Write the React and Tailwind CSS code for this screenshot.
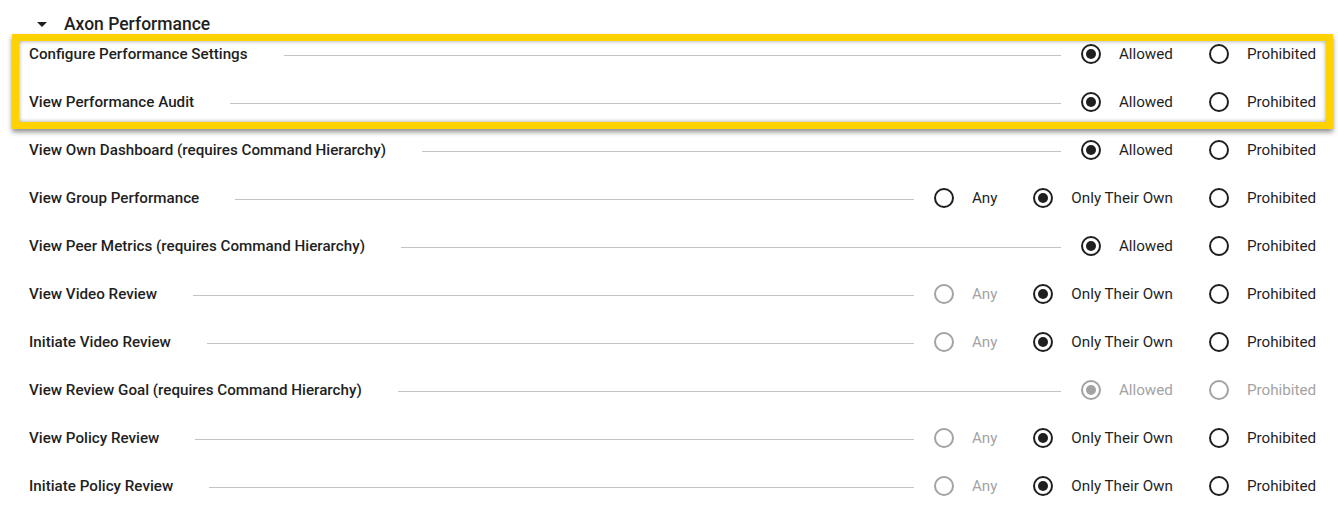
import React from 'react';

const rows = [
  { label: 'Configure Performance Settings', options: [['Allowed', 'on'], ['Prohibited', 'off']] },
  { label: 'View Performance Audit', options: [['Allowed', 'on'], ['Prohibited', 'off']] },
  { label: 'View Own Dashboard (requires Command Hierarchy)', options: [['Allowed', 'on'], ['Prohibited', 'off']] },
  { label: 'View Group Performance', options: [['Any', 'off'], ['Only Their Own', 'on'], ['Prohibited', 'off']] },
  { label: 'View Peer Metrics (requires Command Hierarchy)', options: [['Allowed', 'on'], ['Prohibited', 'off']] },
  { label: 'View Video Review', options: [['Any', 'off', true], ['Only Their Own', 'on'], ['Prohibited', 'off']] },
  { label: 'Initiate Video Review', options: [['Any', 'off', true], ['Only Their Own', 'on'], ['Prohibited', 'off']] },
  { label: 'View Review Goal (requires Command Hierarchy)', options: [['Allowed', 'on', true], ['Prohibited', 'off', true]] },
  { label: 'View Policy Review', options: [['Any', 'off', true], ['Only Their Own', 'on'], ['Prohibited', 'off']] },
  { label: 'Initiate Policy Review', options: [['Any', 'off', true], ['Only Their Own', 'on'], ['Prohibited', 'off']] },
];

function Radio({ checked, disabled }) {
  return (
    <span
      className={
        'flex h-5 w-5 shrink-0 items-center justify-center rounded-full border-2 ' +
        (disabled ? 'border-[#a3a3a3]' : 'border-[#1f1f1f]')
      }
    >
      {checked && (
        <span className={'h-[10px] w-[10px] rounded-full ' + (disabled ? 'bg-[#a3a3a3]' : 'bg-[#1f1f1f]')} />
      )}
    </span>
  );
}

function Row({ row }) {
  return (
    <div className="flex h-12 items-center pl-[29px] pr-[22px] pt-[2px]">
      <span className="text-[15.2px] font-medium text-[#1f1f1f]">{row.label}</span>
      <div className="ml-[36px] mr-[20px] mt-[2px] h-px flex-1 bg-[#c4c4c4]" />
      <div className="flex items-center gap-[36px]">
        {row.options.map(([name, state, disabled]) => (
          <label key={name} className="flex items-center gap-[18px]">
            <Radio checked={state === 'on'} disabled={disabled} />
            <span className={'text-[15.2px] ' + (disabled ? 'text-[#a3a3a3]' : 'text-[#1f1f1f]')}>{name}</span>
          </label>
        ))}
      </div>
    </div>
  );
}

export default function App() {
  return (
    <div className="relative h-[512px] w-[1338px] overflow-hidden bg-white pt-px font-['Roboto',sans-serif]">
      <div className="flex h-[28px] items-center pl-[37px] pt-[18px]">
        <svg width="10" height="5" viewBox="0 0 10 5" className="shrink-0">
          <path d="M0 0h10L5 5z" fill="#1f1f1f" />
        </svg>
        <span className="ml-[17px] text-[17.5px] font-medium text-[#1f1f1f]">Axon Performance</span>
      </div>
      {rows.map((r) => (
        <Row key={r.label} row={r} />
      ))}

      {/* highlight box laid over the first two rows */}
      <div className="pointer-events-none absolute left-[12px] top-[34px] h-[95px] w-[1321px] border-[7px] border-[#ffd200] shadow-[0_3px_5px_rgba(0,0,0,0.45),inset_0_0_4px_rgba(0,0,0,0.4)]" />
    </div>
  );
}
